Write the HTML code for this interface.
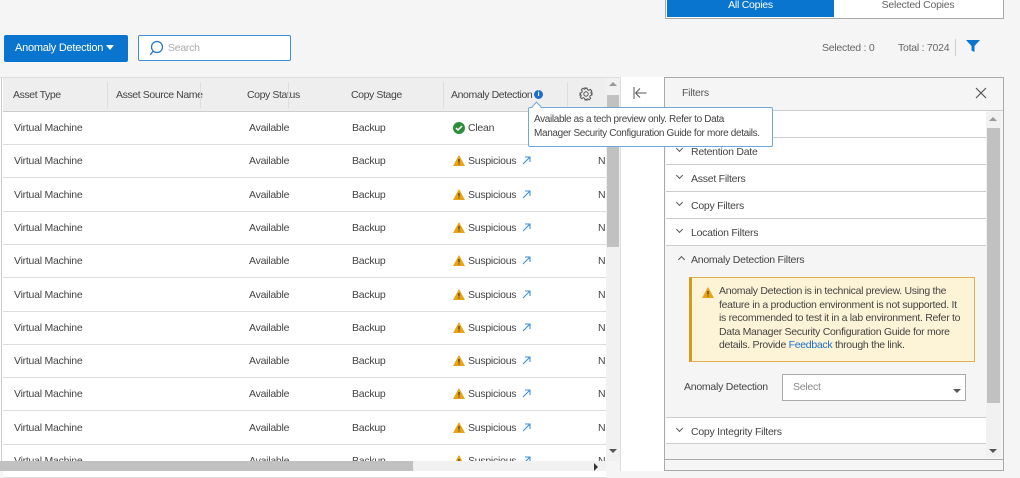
<!DOCTYPE html>
<html><head><meta charset="utf-8"><style>
*{box-sizing:border-box;margin:0;padding:0}
body{width:1020px;height:471px;overflow:hidden;background:#f5f5f5;font-family:"Liberation Sans",sans-serif;font-size:10.5px;letter-spacing:-0.25px;color:#333;position:relative}
.a{position:absolute}
.row{position:absolute;left:3px;width:603px;height:33px;background:#fff;border-bottom:1px solid #ddd}
.row span{position:absolute;top:10px;white-space:nowrap;color:#444}
.hd span{position:absolute;top:11px;color:#444;white-space:nowrap;letter-spacing:-0.4px}
.sep{position:absolute;top:4px;width:1px;height:26px;background:#ddd}
.fi{position:absolute;left:666px;width:321px;background:#fff;border-bottom:1px solid #ccc;height:27px}
.fi span{position:absolute;left:25px;top:8px;color:#444}
.fi i{position:absolute;left:11px;top:8px;width:5px;height:5px;border-right:1.2px solid #555;border-bottom:1.2px solid #555;transform:rotate(45deg)}
</style></head><body>
<div class="a" style="left:665px;top:-2px;width:339px;height:21px;border:1px solid #aaa;background:#fff"></div>
<div class="a" style="left:667px;top:0;width:167px;height:17px;background:#0a75cf;color:#fff;text-align:center;line-height:11px">All Copies</div>
<div class="a" style="left:834px;top:0;width:168px;color:#666;text-align:center;line-height:11px">Selected Copies</div>
<div class="a" style="left:4px;top:35px;width:124px;height:27px;background:#0a75cf;border-radius:2px;color:#fff;font-size:11px;line-height:27px;padding-left:11px">Anomaly Detection <span style="display:inline-block;border:4px solid transparent;border-top:5px solid #fff;vertical-align:-3px"></span></div>
<div class="a" style="left:138px;top:35px;width:153px;height:26px;background:#fff;border:1px solid #3d8fd8;border-radius:2px">
<svg class="a" style="left:10px;top:4px" width="16" height="17" viewBox="0 0 16 17"><circle cx="8" cy="7" r="5.5" fill="none" stroke="#2273c4" stroke-width="1.2"/><path d="M4.2 11l-3 4" stroke="#2273c4" stroke-width="1.2"/></svg>
<span class="a" style="left:29px;top:6px;color:#aaa">Search</span></div>
<div class="a" style="left:822px;top:42px;color:#666">Selected : 0</div>
<div class="a" style="left:898px;top:42px;color:#666">Total : 7024</div>
<div class="a" style="left:955px;top:39px;width:1px;height:17px;background:#ccc"></div>
<svg class="a" style="left:966px;top:40px" width="14" height="13" viewBox="0 0 14 13"><path d="M0 0h14L8.5 6v6l-3-1.5V6z" fill="#0a75cf"/></svg>
<div class="a" style="left:0;top:77px;width:620px;height:384px;background:#fff;border-top:1px solid #ddd"></div>
<div class="a hd" style="left:3px;top:78px;width:603px;height:34px;background:#eee;border-bottom:1px solid #ccc">
<span style="left:10px">Asset Type</span><div class="sep" style="left:104px"></div>
<span style="left:113px">Asset Source Name</span><div class="sep" style="left:197px"></div>
<span style="left:244px">Copy Status</span><div class="sep" style="left:285px"></div>
<span style="left:348px">Copy Stage</span><div class="sep" style="left:440px"></div>
<span style="left:448px">Anomaly Detection</span>
<div class="a" style="left:531px;top:12px;width:9px;height:9px;border-radius:50%;background:#1e6fc8;color:#fff;font-size:7px;text-align:center;line-height:9px;font-weight:bold">i</div>
<div class="sep" style="left:564px"></div>
<svg class="a" style="left:576px;top:9px" width="14" height="14" viewBox="0 0 14 14"><circle cx="7" cy="7" r="2.2" fill="none" stroke="#555" stroke-width="1"/><path d="M6 1h2l.4 1.7 1.4.6 1.5-.9 1.4 1.4-.9 1.5.6 1.4L13 6v2l-1.7.4-.6 1.4.9 1.5-1.4 1.4-1.5-.9-1.4.6L8 13H6l-.4-1.7-1.4-.6-1.5.9-1.4-1.4.9-1.5-.6-1.4L1 8V6l1.7-.4.6-1.4-.9-1.5 1.4-1.4 1.5.9 1.4-.6z" fill="none" stroke="#555" stroke-width="1"/></svg>
</div>
<div class="a" style="left:1px;top:78px;width:1px;height:383px;background:#ccc"></div>
<div id="rows"></div>
<div class="a" style="left:606px;top:78px;width:14px;height:383px;background:#f1f1f1"></div>
<div class="a" style="left:609px;top:82px;border:4px solid transparent;border-bottom:4px solid #999;border-top:0"></div>
<div class="a" style="left:607px;top:95px;width:12px;height:152px;background:#c1c1c1"></div>
<div class="a" style="left:609px;top:449px;border:4px solid transparent;border-top:4px solid #555;border-bottom:0"></div>
<div class="a" style="left:0;top:461px;width:606px;height:10px;background:#f1f1f1"></div>
<div class="a" style="left:0;top:461px;width:413px;height:10px;background:#c1c1c1"></div>
<div class="a" style="left:594px;top:463px;border:4px solid transparent;border-left:4px solid #333;border-right:0"></div>
<div class="a" style="left:620px;top:77px;width:44px;height:394px;background:#fff;border-left:1px solid #ddd"></div>
<svg class="a" style="left:633px;top:87px" width="14" height="12" viewBox="0 0 14 12"><path d="M1 0v12M2.5 6h11M2.5 6l4.5-4.5M2.5 6l4.5 4.5" stroke="#555" stroke-width="1" fill="none"/></svg>
<div class="a" style="left:664px;top:77px;width:340px;height:394px;border:1px solid #aaa;background:#f5f5f5"></div>
<div class="a" style="left:665px;top:78px;width:338px;height:33px;background:#f5f5f5;border-bottom:1px solid #ccc"></div>
<div class="a" style="left:682px;top:87px;color:#555">Filters</div>
<svg class="a" style="left:975px;top:87px" width="12" height="12" viewBox="0 0 12 12"><path d="M1 1l10 10M11 1L1 11" stroke="#555" stroke-width="1.2"/></svg>
<div class="fi" style="top:111px"><span>Copy Time</span></div>
<div class="fi" style="top:138px"><i></i><span>Retention Date</span></div>
<div class="fi" style="top:165px"><i></i><span>Asset Filters</span></div>
<div class="fi" style="top:192px"><i></i><span>Copy Filters</span></div>
<div class="fi" style="top:219px"><i></i><span>Location Filters</span></div>
<div class="a" style="left:666px;top:246px;width:321px;height:172px;background:#f5f5f5;border-bottom:1px solid #ccc"></div>
<div class="a" style="left:679px;top:257px;width:5px;height:5px;border-left:1.2px solid #555;border-top:1.2px solid #555;transform:rotate(45deg)"></div>
<div class="a" style="left:691px;top:254px;color:#444">Anomaly Detection Filters</div>
<div class="a" style="left:689px;top:277px;width:286px;height:85px;background:#fdf3d6;border:1px solid #e0b050;border-left:3px solid #d49a1a"></div>
<svg class="a" style="left:702px;top:287px" width="12" height="11" viewBox="0 0 12 11"><path d="M6 0L12 11H0z" fill="#e8a317"/><path d="M6 4v3.5M6 8.5v1" stroke="#222" stroke-width="1"/></svg>
<div class="a" style="left:719px;top:285px;line-height:13.5px;color:#444;letter-spacing:-0.3px;white-space:nowrap">Anomaly Detection is in technical preview. Using the<br>feature in a production environment is not supported. It<br>is recommended to test it in a lab environment. Refer to<br>Data Manager Security Configuration Guide for more<br>details. Provide <span style="color:#1e6fc8">Feedback</span> through the link.</div>
<div class="a" style="left:684px;top:381px;color:#444">Anomaly Detection</div>
<div class="a" style="left:782px;top:374px;width:184px;height:27px;background:#fff;border:1px solid #aaa"></div>
<div class="a" style="left:793px;top:381px;color:#888">Select</div>
<div class="a" style="left:953px;top:389px;border:4px solid transparent;border-top:4px solid #555;border-bottom:0"></div>
<div class="fi" style="top:418px;height:26px"><i></i><span>Copy Integrity Filters</span></div>
<div class="a" style="left:665px;top:459px;width:338px;height:1px;background:#aaa"></div>
<div class="a" style="left:986px;top:112px;width:15px;height:345px;background:#f1f1f1"></div>
<div class="a" style="left:989px;top:117px;border:4px solid transparent;border-bottom:4px solid #999;border-top:0"></div>
<div class="a" style="left:987px;top:128px;width:13px;height:275px;background:#c1c1c1"></div>
<div class="a" style="left:989px;top:449px;border:4px solid transparent;border-top:4px solid #555;border-bottom:0"></div>
<div class="a" style="left:528px;top:107px;width:245px;height:40px;background:#fff;border:1px solid #6fa8dc;border-radius:2px;padding:5px 5px;line-height:14px;color:#444;font-size:10px;letter-spacing:-0.35px;white-space:nowrap">Available as a tech preview only. Refer to Data<br>Manager Security Configuration Guide for more details.</div>
<div class="a" style="left:533px;top:103px;width:7px;height:7px;background:#fff;border-left:1px solid #6fa8dc;border-top:1px solid #6fa8dc;transform:rotate(45deg)"></div>
<script>
var h='';for(var i=0;i<11;i++){var t=112+i*33.3;var a=i==0?'<svg style="position:absolute;left:450px;top:10px" width="12" height="12"><circle cx="6" cy="6" r="6" fill="#2a8f3b"/><path d="M3 6l2 2 4-4" stroke="#fff" stroke-width="1.5" fill="none"/></svg><span style="left:465px">Clean</span>':'<svg style="position:absolute;left:450px;top:10px" width="12" height="11"><path d="M6 0L12 11H0z" fill="#e8a317"/><path d="M6 4v3.5M6 8.5v1" stroke="#222" stroke-width="1"/></svg><span style="left:465px">Suspicious</span><svg style="position:absolute;left:519px;top:11px" width="9" height="9"><path d="M1 8L8 1M3 1h5v5" stroke="#3d8fd8" stroke-width="1.1" fill="none"/></svg><span style="left:595px">N</span>';
h+='<div class="row" style="top:'+t+'px"><span style="left:11px">Virtual Machine</span><span style="left:246px">Available</span><span style="left:349px">Backup</span>'+a+'</div>';}
document.getElementById('rows').outerHTML=h;
</script>
</body></html>
